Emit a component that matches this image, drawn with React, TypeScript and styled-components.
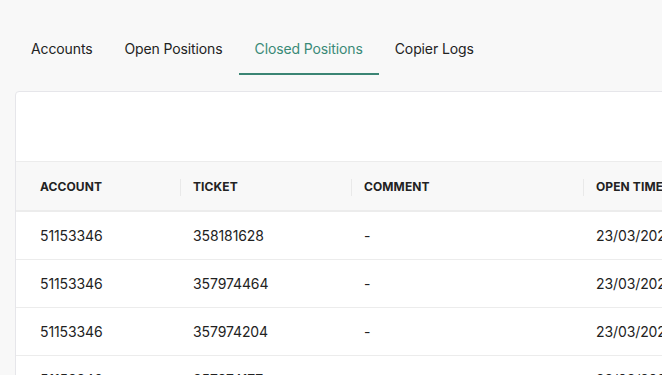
import React from "react";
import styled, { createGlobalStyle } from "styled-components";

const Global = createGlobalStyle`
  html, body { margin: 0; padding: 0; background: #f8f8f8; overflow: hidden; }
  body { font-family: Inter, "Noto Sans", sans-serif; color: #222; }
`;

const Page = styled.div`
  padding: 22px 0 0 15px;
  width: 647px;
  height: 353px;
  overflow: hidden;
`;

const Tabs = styled.nav`
  display: flex;
`;

const Tab = styled.div<{ $active?: boolean }>`
  padding: 17px 16px 14px;
  line-height: 20px;
  font-size: 14px;
  letter-spacing: -0.12px;
  color: ${(p) => (p.$active ? "#3a8a77" : "#222")};
  border-bottom: 2px solid ${(p) => (p.$active ? "#3b8574" : "transparent")};
  white-space: nowrap;
`;

const Card = styled.section`
  margin-top: 16px;
  width: 1200px;
  background: #fff;
  border: 1px solid #e6e6ea;
  border-radius: 4px;
`;

const Toolbar = styled.div`
  height: 69px;
`;

const Table = styled.table`
  border-collapse: collapse;
  table-layout: fixed;
  width: 100%;
`;

const Th = styled.th<{ $first?: boolean }>`
  position: relative;
  height: 48px;
  padding: 0 0 0 ${(p) => (p.$first ? "24px" : "13px")};
  background: #f8f8f8;
  border-top: 1px solid #ececec;
  border-bottom: 2px solid #ececec;
  text-align: left;
  font-size: 12px;
  font-weight: 700;
  letter-spacing: 0.1px;
  color: #222;
  &::before {
    content: "";
    display: ${(p) => (p.$first ? "none" : "block")};
    position: absolute;
    left: 0;
    top: 17px;
    height: 17px;
    width: 1px;
    background: #e9e9e9;
  }
`;

const Td = styled.td<{ $first?: boolean }>`
  height: 47px;
  padding: 0 0 0 ${(p) => (p.$first ? "24px" : "13px")};
  border-bottom: 1px solid #ececec;
  font-size: 14px;
  letter-spacing: -0.1px;
  color: #222;
  white-space: nowrap;
  overflow: hidden;
`;

const rows = [
  ["51153346", "358181628", "-", "23/03/2023 10:12:45"],
  ["51153346", "357974464", "-", "23/03/2023 08:41:02"],
  ["51153346", "357974204", "-", "23/03/2023 08:40:37"],
  ["51153346", "357974177", "-", "23/03/2023 08:40:31"],
];

export default function App() {
  return (
    <>
      <Global />
      <Page>
        <Tabs>
          <Tab>Accounts</Tab>
          <Tab>Open Positions</Tab>
          <Tab $active>Closed Positions</Tab>
          <Tab>Copier Logs</Tab>
        </Tabs>
        <Card>
          <Toolbar />
          <Table>
            <colgroup>
              <col style={{ width: 164 }} />
              <col style={{ width: 171 }} />
              <col style={{ width: 232 }} />
              <col style={{ width: 200 }} />
              <col />
            </colgroup>
            <thead>
              <tr>
                <Th $first>ACCOUNT</Th>
                <Th>TICKET</Th>
                <Th>COMMENT</Th>
                <Th>OPEN TIME</Th>
                <Th>SYMBOL</Th>
              </tr>
            </thead>
            <tbody>
              {rows.map((r, i) => (
                <tr key={i}>
                  <Td $first>{r[0]}</Td>
                  <Td>{r[1]}</Td>
                  <Td>{r[2]}</Td>
                  <Td>{r[3]}</Td>
                  <Td>EURUSD</Td>
                </tr>
              ))}
            </tbody>
          </Table>
        </Card>
      </Page>
    </>
  );
}
